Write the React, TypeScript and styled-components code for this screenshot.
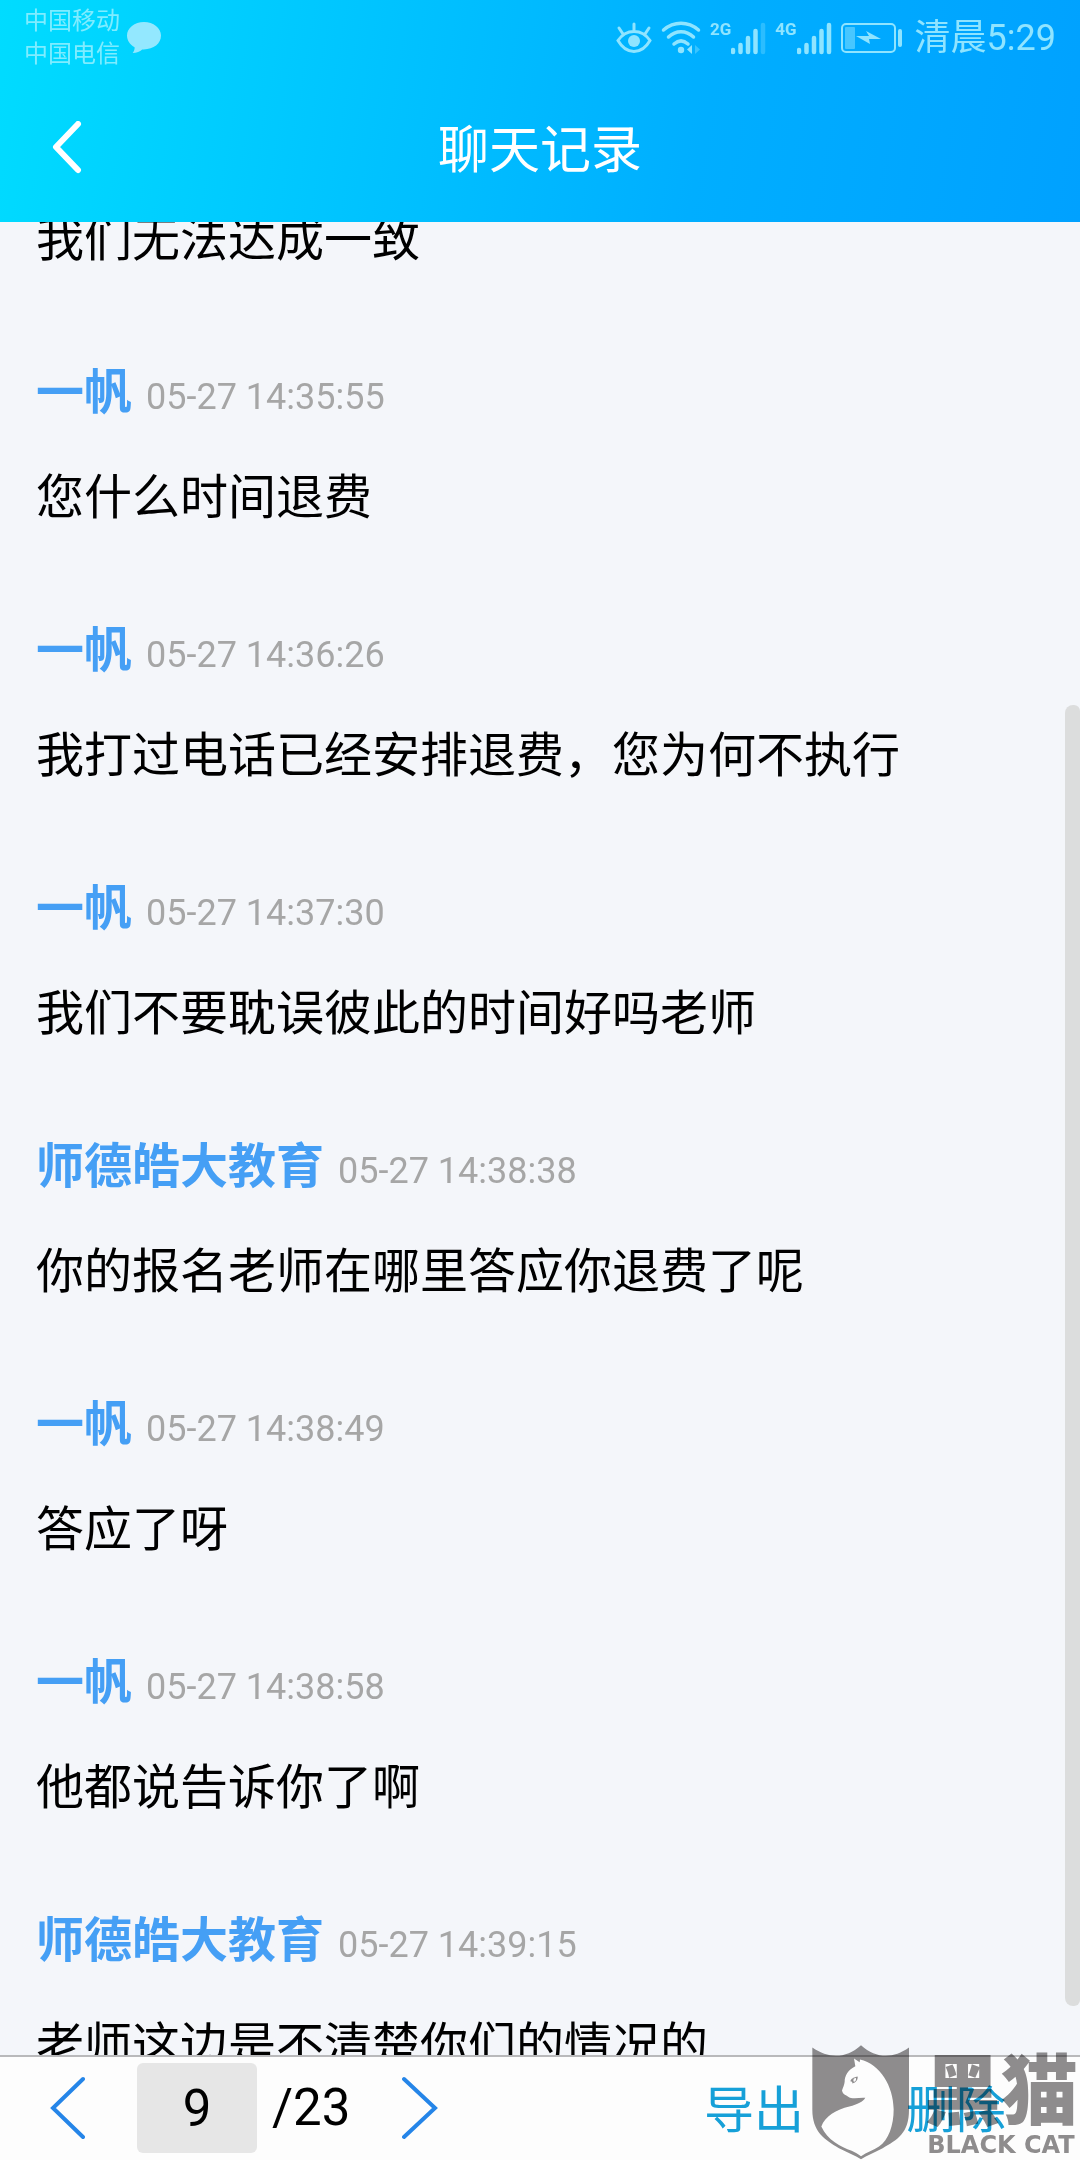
import React, { useLayoutEffect, useRef } from 'react';
import styled, { createGlobalStyle } from 'styled-components';

const GlobalStyle = createGlobalStyle`
  *, *::before, *::after { box-sizing: border-box; }
  body {
    margin: 0;
    font-family: Roboto, "Noto Sans CJK SC", sans-serif;
    background: #f4f6fa;
  }
  button, input { font: inherit; margin: 0; padding: 0; border: 0; background: none; color: inherit; }
`;

const Screen = styled.div`
  position: relative;
  display: flex;
  flex-direction: column;
  height: 100vh;
  overflow: hidden;
`;

const Header = styled.header`
  flex: none;
  color: #fff;
  background: linear-gradient(100deg, #00dcff 0%, #00c3ff 35%, #00aeff 65%, #00a1ff 100%);
`;

const StatusBar = styled.div`
  display: flex;
  align-items: center;
  justify-content: space-between;
  height: 76px;
  padding: 0 24px;
  color: #8fe4ff;
`;

const StatusGroup = styled.div<{ $gap: number }>`
  display: flex;
  align-items: center;
  gap: ${({ $gap }) => $gap}px;
`;

const Carriers = styled.div`
  font-size: 24px;
  line-height: 33px;
  color: #7fecff;
`;

const Clock = styled.time`
  margin-left: 3px;
  font-size: 36px;
  line-height: 48px;
`;

const NavBar = styled.nav`
  display: grid;
  grid-template-columns: 120px 1fr 120px;
  align-items: center;
  height: 146px;
`;

const BackButton = styled.button`
  display: flex;
  padding-left: 48px;
`;

const Title = styled.h1`
  margin: 0;
  padding-top: 4px;
  font-size: 51px;
  font-weight: 400;
  line-height: 72px;
  text-align: center;
`;

const Body = styled.main`
  position: relative;
  flex: 1;
  min-height: 0;
`;

const Messages = styled.div`
  height: 100%;
  padding: 0 36px;
  overflow-y: auto;
  scrollbar-width: none;
`;

const Message = styled.article`
  padding-bottom: 89px;
`;

const MessageHead = styled.header`
  display: flex;
  align-items: baseline;
  gap: 14px;
  height: 64px;
  margin-bottom: 41px;
  line-height: 64px;
`;

const Sender = styled.strong`
  font-size: 48px;
  font-weight: 700;
  color: #459ff5;
`;

const SentAt = styled.time`
  font-size: 36px;
  color: #a6a6a6;
`;

const MessageText = styled.p`
  margin: 0;
  font-size: 48px;
  line-height: 64px;
  color: #000;
`;

const ScrollThumb = styled.div`
  position: absolute;
  right: 0;
  bottom: 49px;
  width: 15px;
  height: 71%;
  border-radius: 8px 6px 6px 8px;
  background: #dcdddd;
`;

const Footer = styled.footer`
  flex: none;
  display: flex;
  align-items: center;
  justify-content: space-between;
  height: 105px;
  padding: 0 74px 2px 49px;
  border-top: 2px solid #b9b9bb;
  background: #fdfdfd;
`;

const Pager = styled.div`
  display: flex;
  align-items: center;
  font-size: 51px;
`;

const PageButton = styled.button`
  display: flex;
  width: 36px;
`;

const PageField = styled.label`
  display: flex;
  align-items: center;
  gap: 15px;
  margin: 0 52px;
`;

const PageInput = styled.input`
  width: 120px;
  height: 90px;
  padding-top: 2px;
  border-radius: 6px;
  background: #e6e6e6;
  text-align: center;
`;

const Actions = styled.div`
  display: flex;
  gap: 102px;
  padding-top: 6px;
`;

const ActionButton = styled.button`
  font-size: 50px;
  line-height: 72px;
  color: #16a0d8;
`;

const Watermark = styled.div`
  position: absolute;
  right: 2px;
  bottom: 0;
  display: flex;
  gap: 13px;
  color: #8f8d8e;
  mix-blend-mode: multiply;
  pointer-events: none;
`;

const Brand = styled.div`
  display: flex;
  flex-direction: column;
  justify-content: flex-end;
  align-items: center;
`;

const BrandName = styled.div`
  font-size: 77px;
  font-weight: 900;
  line-height: 76px;
`;

const BrandLatin = styled.div`
  font-family: "DejaVu Sans", sans-serif;
  font-size: 24px;
  font-weight: 700;
  line-height: 29px;
  white-space: nowrap;
`;

const BubbleIcon = () => (
  <svg width="36" height="34" viewBox="0 0 36 34" fill="#93e8ff" aria-hidden="true">
    <path d="M18 1C8.600 1 1 7 1 14.600c0 5 3 9.200 7.600 11.700.2 2.300-.6 4-2 5.800 4.300-.3 7.200-1.600 9.600-3.700C27 29 35 23 35 14.600 35 7 27.400 1 18 1z" />
  </svg>
);

const EyeIcon = () => (
  <svg width="36" height="34" viewBox="0 0 36 34" fill="none" stroke="currentColor" strokeWidth="3" strokeLinecap="round" aria-hidden="true">
    <path d="M2 19.500C6 13.500 11.500 10.500 18 10.500s12 3 16 9c-4 7-9.500 11-16 11s-12-4-16-11zM18 10V3M7 13L3 7M29 13l4-6" />
    <circle cx="18" cy="20" r="6" fill="currentColor" stroke="none" />
  </svg>
);

const WifiIcon = () => (
  <svg width="40" height="34" viewBox="0 0 40 34" fill="none" stroke="currentColor" strokeWidth="3.500" strokeLinecap="round" aria-hidden="true">
    <path d="M2.500 9c10.500-9 24.500-9 35 0M7.500 16c7.500-7 17.500-7 25 0M13 23c4.500-4 9.500-4 14 0" />
    <circle cx="20" cy="29" r="3.200" fill="currentColor" stroke="none" />
    <path d="M31 24v9l-5-4.500z" fill="currentColor" stroke="none" />
    <path d="M34 24v9l5-4.500z" fill="currentColor" stroke="none" opacity=".4" />
  </svg>
);

const Network = styled.span`
  align-self: flex-start;
  font-size: 17px;
  font-weight: 700;
  line-height: 16px;
`;

const SignalWrap = styled.span`
  display: flex;
  height: 34px;
`;

const Signal = ({ label, bars }: { label: string; bars: number }) => (
  <SignalWrap>
    <Network>{label}</Network>
    <svg width="35" height="34" viewBox="1 0 35 34" stroke="currentColor" strokeWidth="4.500" strokeLinecap="round" aria-hidden="true">
      {[28, 23, 16, 9, 3].map((top, i) => (
        <path key={top} d={`M${3 + i * 7.5} ${top + 1}V31`} opacity={i < bars ? 1 : 0.3} />
      ))}
    </svg>
  </SignalWrap>
);

const BatteryIcon = () => (
  <svg width="62" height="30" viewBox="0 0 62 30" aria-hidden="true">
    <rect x="1" y="1" width="53" height="28" rx="4" fill="none" stroke="currentColor" strokeWidth="2" />
    <rect x="4" y="4" width="10" height="22" rx="1" fill="currentColor" opacity=".5" />
    <path d="M15 13l13 0-3-5 15 8-12 0 1 5z" fill="currentColor" />
    <rect x="57" y="6" width="4" height="18" rx="2" fill="currentColor" />
  </svg>
);

const Chevron = ({ flip = false }: { flip?: boolean }) => (
  <svg width="36" height="64" viewBox="0 0 36 64" fill="none" stroke="#2585e8" strokeWidth="4" strokeLinecap="round" aria-hidden="true">
    <path d={flip ? 'M2 3l31 29L2 61' : 'M34 3L4 32l30 29'} />
  </svg>
);

const ShieldCat = () => (
  <svg width="100" height="117" viewBox="90 40 300 350" aria-hidden="true">
    <path
      fill="currentColor"
      fillRule="evenodd"
      d="M94 53C145 88 195 86 240 46C285 86 335 88 384 53V240C384 310 350 330 305 355C280 368 258 376 240 388C222 376 200 368 174 355C130 330 94 305 94 240ZM219 86L223 109C202 119 190 138 191 156C190 166 186 173 183 182C184 190 190 195 196 197C202 202 208 205 215 205C228 207 240 202 253 204C246 216 230 224 205 230C166 239 132 259 121 290C139 331 180 351 212 363C222 368 232 373 240 379C257 368 278 360 294 350C323 330 338 286 338 238C337 169 298 103 237 89L236 97Z"
    />
    <path fill="currentColor" fillRule="evenodd" d="M208 154C212 144 221 142 230 140C231 150 225 158 214 161C215 156 212 154 208 154ZM218 147L217 154L221 156C226 152 226 147 224 144Z" />
  </svg>
);

const messages = [
  { sender: '一帆', time: '05-27 14:35:55', text: '您什么时间退费' },
  { sender: '一帆', time: '05-27 14:36:26', text: '我打过电话已经安排退费，您为何不执行' },
  { sender: '一帆', time: '05-27 14:37:30', text: '我们不要耽误彼此的时间好吗老师' },
  { sender: '师德皓大教育', time: '05-27 14:38:38', text: '你的报名老师在哪里答应你退费了呢' },
  { sender: '一帆', time: '05-27 14:38:49', text: '答应了呀' },
  { sender: '一帆', time: '05-27 14:38:58', text: '他都说告诉你了啊' },
  { sender: '师德皓大教育', time: '05-27 14:39:15', text: '老师这边是不清楚你们的情况的' },
];

export default function App() {
  const listRef = useRef<HTMLDivElement>(null);

  useLayoutEffect(() => {
    if (listRef.current) listRef.current.scrollTop = 14;
  }, []);

  return (
    <>
      <GlobalStyle />
      <Screen>
        <Header>
          <StatusBar>
            <StatusGroup $gap={6}>
              <Carriers>
                <div>中国移动</div>
                <div>中国电信</div>
              </Carriers>
              <BubbleIcon />
            </StatusGroup>
            <StatusGroup $gap={9}>
              <EyeIcon />
              <WifiIcon />
              <Signal label="2G" bars={4} />
              <Signal label="4G" bars={5} />
              <BatteryIcon />
              <Clock>清晨5:29</Clock>
            </StatusGroup>
          </StatusBar>
          <NavBar>
            <BackButton type="button" aria-label="返回">
              <svg width="36" height="56" viewBox="0 0 36 56" fill="none" stroke="#fff" strokeWidth="6" strokeLinecap="round" strokeLinejoin="round" aria-hidden="true">
                <path d="M30 3L8 26l22 23" />
              </svg>
            </BackButton>
            <Title>聊天记录</Title>
          </NavBar>
        </Header>

        <Body>
          <Messages ref={listRef}>
            <Message>
              <MessageText>我们无法达成一致</MessageText>
            </Message>
            {messages.map((m) => (
              <Message key={m.time}>
                <MessageHead>
                  <Sender>{m.sender}</Sender>
                  <SentAt>{m.time}</SentAt>
                </MessageHead>
                <MessageText>{m.text}</MessageText>
              </Message>
            ))}
          </Messages>
          <ScrollThumb />
        </Body>

        <Footer>
          <Pager>
            <PageButton type="button" aria-label="上一页"><Chevron /></PageButton>
            <PageField>
              <PageInput type="text" inputMode="numeric" aria-label="页码" defaultValue="9" />
              <span>/23</span>
            </PageField>
            <PageButton type="button" aria-label="下一页"><Chevron flip /></PageButton>
          </Pager>
          <Actions>
            <ActionButton type="button">导出</ActionButton>
            <ActionButton type="button">删除</ActionButton>
          </Actions>
        </Footer>

        <Watermark>
          <ShieldCat />
          <Brand>
            <BrandName>黑猫</BrandName>
            <BrandLatin>BLACK CAT</BrandLatin>
          </Brand>
        </Watermark>
      </Screen>
    </>
  );
}
